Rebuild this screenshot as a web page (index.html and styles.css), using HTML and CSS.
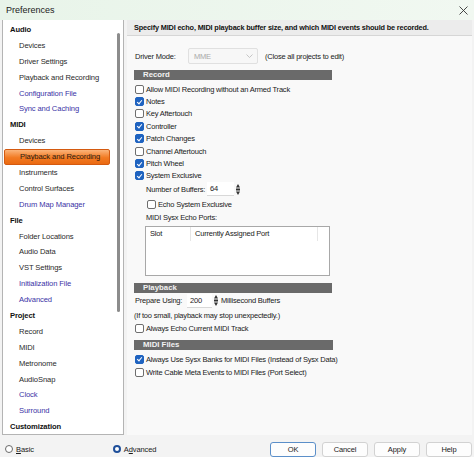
FILE: index.html
```html
<!DOCTYPE html>
<html lang="en">
<head>
    <meta charset="UTF-8">
    <title>Preferences</title>
    <link rel="stylesheet" href="styles.css">
</head>
<body>
    <div class="window">
        <div class="titlebar">
            <span class="title">Preferences</span>
            <svg class="close" width="9" height="9" viewBox="0 0 9 9"><path d="M0.5 0.5 L8.5 8.5 M8.5 0.5 L0.5 8.5" stroke="#333" stroke-width="0.9"/></svg>
        </div>

        <div class="main">
            <div class="tree">
                <div class="thumb"></div>
                <div class="cat">Audio</div>
                <div class="item">Devices</div>
                <div class="item">Driver Settings</div>
                <div class="item">Playback and Recording</div>
                <div class="item link">Configuration File</div>
                <div class="item link">Sync and Caching</div>
                <div class="cat">MIDI</div>
                <div class="item">Devices</div>
                <div class="item selected">Playback and Recording</div>
                <div class="item">Instruments</div>
                <div class="item">Control Surfaces</div>
                <div class="item link">Drum Map Manager</div>
                <div class="cat">File</div>
                <div class="item">Folder Locations</div>
                <div class="item">Audio Data</div>
                <div class="item">VST Settings</div>
                <div class="item link">Initialization File</div>
                <div class="item link">Advanced</div>
                <div class="cat">Project</div>
                <div class="item">Record</div>
                <div class="item">MIDI</div>
                <div class="item">Metronome</div>
                <div class="item">AudioSnap</div>
                <div class="item link">Clock</div>
                <div class="item link">Surround</div>
                <div class="cat">Customization</div>
            </div>

            <div class="pane">
                <div class="pane-head">Specify MIDI echo, MIDI playback buffer size, and which MIDI events should be recorded.</div>
                <div class="pane-body">
                    <div class="driver">
                        <span class="driver-label">Driver Mode:</span>
                        <div class="select">
                            <span>MME</span>
                            <svg width="7" height="4" viewBox="0 0 7 4"><path d="M0.5 0.5 L3.5 3.5 L6.5 0.5" fill="none" stroke="#b8b8b8" stroke-width="0.8"/></svg>
                        </div>
                        <span class="note">(Close all projects to edit)</span>
                    </div>

                    <div class="section">Record</div>
                    <div class="checks">
                        <div class="check"><span class="box"></span>Allow MIDI Recording without an Armed Track</div>
                        <div class="check"><span class="box on"></span>Notes</div>
                        <div class="check"><span class="box"></span>Key Aftertouch</div>
                        <div class="check"><span class="box on"></span>Controller</div>
                        <div class="check"><span class="box on"></span>Patch Changes</div>
                        <div class="check"><span class="box"></span>Channel Aftertouch</div>
                        <div class="check"><span class="box on"></span>Pitch Wheel</div>
                        <div class="check"><span class="box on"></span>System Exclusive</div>
                    </div>

                    <div class="sysx">
                        <div class="field buffers">
                            <span class="field-label">Number of Buffers:</span>
                            <div class="input">64</div>
                            <svg class="spin" width="4" height="11" viewBox="0 0 4 11"><path d="M2 0 L4 3.5 L0 3.5 Z M0 4.5 H4 V6.5 H0 Z M0 7.5 L4 7.5 L2 11 Z" fill="#333"/></svg>
                        </div>
                        <div class="check echo"><span class="box"></span>Echo System Exclusive</div>
                        <div class="ports-label">MIDI Sysx Echo Ports:</div>
                        <div class="list">
                            <div class="list-head">
                                <span class="col slot">Slot</span>
                                <span class="col port">Currently Assigned Port</span>
                                <span class="col rest"></span>
                            </div>
                        </div>
                    </div>

                    <div class="section playback">Playback</div>
                    <div class="field prepare">
                        <span class="field-label">Prepare Using:</span>
                        <div class="input">200</div>
                        <svg class="spin" width="4" height="11" viewBox="0 0 4 11"><path d="M2 0 L4 3.5 L0 3.5 Z M0 4.5 H4 V6.5 H0 Z M0 7.5 L4 7.5 L2 11 Z" fill="#333"/></svg>
                        <span class="unit">Millisecond Buffers</span>
                    </div>
                    <div class="hint">(If too small, playback may stop unexpectedly.)</div>
                    <div class="check"><span class="box"></span>Always Echo Current MIDI Track</div>

                    <div class="section files">MIDI Files</div>
                    <div class="check"><span class="box on"></span>Always Use Sysx Banks for MIDI Files (Instead of Sysx Data)</div>
                    <div class="check"><span class="box"></span>Write Cable Meta Events to MIDI Files (Port Select)</div>
                </div>
            </div>
        </div>

        <div class="footer">
            <div class="radio"><span class="dot"></span><span><u>B</u>asic</span></div>
            <div class="radio advanced"><span class="dot on"></span><span>A<u>d</u>vanced</span></div>
            <div class="buttons">
                <button class="default">OK</button>
                <button>Cancel</button>
                <button>Apply</button>
                <button>Help</button>
            </div>
        </div>
    </div>
</body>
</html>
```

FILE: styles.css
```css
* { margin: 0; padding: 0; box-sizing: border-box; }
body {
    font-family: "Liberation Sans", Arial, sans-serif;
    font-size: 7.5px;
    letter-spacing: -0.2px;
    color: #1a1a1a;
    background: #f3f3f3;
}
.window {
    width: 474px;
    height: 457px;
    display: flex;
    flex-direction: column;
    overflow: hidden;
}
.titlebar {
    height: 20px;
    flex: none;
    display: flex;
    align-items: center;
    justify-content: space-between;
    padding: 0 6px;
    background: linear-gradient(to right, #e8f4e9, #f1f8f1);
}
.title {
    font-size: 9px;
    letter-spacing: 0;
    color: #222;
}

.main {
    height: 415px;
    flex: none;
    display: flex;
    padding-left: 2px;
}

/* left tree */
.tree {
    width: 122px;
    position: relative;
    background: #fff;
    border: 1px solid #b4b4b4;
    border-top: none;
    padding-top: 2px;
    font-size: 7.6px;
    letter-spacing: -0.1px;
}
.thumb {
    position: absolute;
    left: 114px;
    top: 13px;
    width: 3px;
    height: 279px;
    border-radius: 2px;
    background: #8c8c8c;
}
.cat, .item {
    height: 15.9px;
    line-height: 15.9px;
    white-space: nowrap;
}
.cat {
    padding-left: 7px;
    font-weight: bold;
    color: #111;
}
.item {
    padding-left: 16px;
    color: #2a2a2a;
}
.item.link { color: #3a33a6; }
.item.selected {
    margin: 0 13px 0 1px;
    padding-left: 15px;
    border: 1px solid #d45a10;
    border-radius: 2px;
    line-height: 13.9px;
    background: linear-gradient(to bottom, #fbb47a, #f27a22 55%, #ea6a12);
    color: #2a1a10;
}

/* right pane */
.pane {
    flex: 1;
    margin-left: 3px;
    margin-right: 2px;
    background: #f9f9f9;
    display: flex;
    flex-direction: column;
}
.pane-head {
    height: 16px;
    line-height: 16px;
    padding-left: 7px;
    background: #ececec;
    border-bottom: 1px solid #d6d6d6;
    font-weight: bold;
    font-size: 7.3px;
    letter-spacing: -0.15px;
    white-space: nowrap;
    color: #111;
}
.pane-body {
    padding: 12px 0 0 7px;
    display: flex;
    flex-direction: column;
}

.driver {
    height: 16px;
    display: flex;
    align-items: center;
}
.driver-label {
    width: 54px;
    padding-left: 1px;
}
.select {
    width: 70px;
    height: 16px;
    display: flex;
    align-items: center;
    justify-content: space-between;
    padding: 0 4px 0 5px;
    background: #f7f7f7;
    border: 1px solid #e0e0e0;
    border-radius: 2px;
    color: #a8a8a8;
}
.note { margin-left: 7px; }

.section {
    width: 198px;
    height: 10px;
    line-height: 10px;
    margin-top: 6px;
    padding-left: 9px;
    background: #6a6a6a;
    color: #f2f2f2;
    font-weight: bold;
    font-size: 7.8px;
    letter-spacing: 0;
}
.section.playback { margin-top: 7px; }
.section.files { margin-top: 5px; width: 199px; }

.checks { margin-top: 3px; }
.check {
    height: 12.4px;
    display: flex;
    align-items: center;
    white-space: nowrap;
}
.box {
    width: 9px;
    height: 9px;
    margin: 0 2px 0 1px;
    flex: none;
    border: 1px solid #6e6e6e;
    border-radius: 2px;
    background: #fff;
    position: relative;
}
.box.on {
    border-color: #1f63c0;
    background: #1f63c0;
}
.box.on::after {
    content: "";
    position: absolute;
    left: 2px;
    top: 0.5px;
    width: 2px;
    height: 4px;
    border-right: 1px solid #fff;
    border-bottom: 1px solid #fff;
    transform: rotate(40deg);
}

.sysx {
    padding-left: 12px;
    display: flex;
    flex-direction: column;
}
.field {
    height: 14px;
    display: flex;
    align-items: center;
}
.buffers .field-label { width: 61px; }
.input {
    height: 14px;
    line-height: 13px;
    padding-left: 3px;
    background: #fff;
    border-bottom: 1px solid #d8d8d8;
}
.buffers .input { width: 27px; }
.spin { margin-left: 2px; }
.check.echo { margin-top: 2px; }
.ports-label {
    height: 12px;
    line-height: 12px;
    margin-top: 1px;
}
.list {
    width: 185px;
    height: 50px;
    margin-top: 2px;
    margin-left: -1px;
    background: #fff;
    border: 1px solid #a8a8a8;
}
.list-head {
    height: 14px;
    display: flex;
}
.col {
    height: 14px;
    line-height: 14px;
    padding-left: 4px;
    border-right: 1px solid #e6e6e6;
}
.col.slot { width: 45px; }
.col.port { width: 127px; }
.col.rest { flex: 1; border-right: none; }

.field.prepare { margin-top: 1px; }
.prepare .field-label { width: 53px; padding-left: 1px; }
.prepare .input { width: 25px; }
.unit { margin-left: 3px; }
.hint {
    height: 12px;
    line-height: 12px;
    margin-top: 2px;
}
.hint + .check { margin-top: 1px; }
.section.files + .check { margin-top: 3px; }
.check + .check { margin-top: 1.5px; }
.checks .check + .check { margin-top: 0; }

/* footer */
.footer {
    flex: 1;
    display: flex;
    align-items: center;
    padding: 6px 2px 0 5px;
    letter-spacing: -0.1px;
}
.radio {
    display: flex;
    align-items: center;
    gap: 3px;
}
.radio.advanced { margin-left: 79px; }
.dot {
    width: 8px;
    height: 8px;
    border-radius: 50%;
    border: 1px solid #6a6a6a;
    background: #fff;
}
.dot.on {
    border: 2.5px solid #1f4f9a;
}
.buttons {
    margin-left: auto;
    display: flex;
    gap: 6px;
}
button {
    width: 46px;
    height: 15px;
    font-family: inherit;
    font-size: 7.5px;
    letter-spacing: -0.1px;
    color: #1a1a1a;
    background: #fdfdfd;
    border: 1px solid #d2d2d2;
    border-radius: 3px;
}
button.default {
    border-color: #5b8fc9;
}
```
